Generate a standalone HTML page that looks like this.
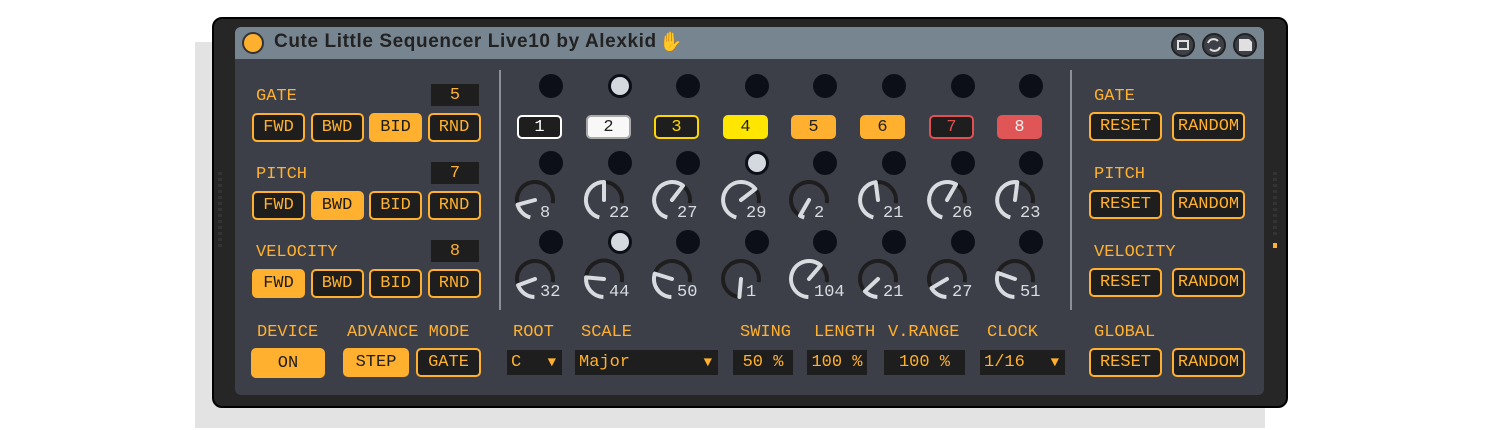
<!DOCTYPE html>
<html><head><meta charset="utf-8"><style>
body{margin:0;width:1500px;height:430px;background:#fff;position:relative;overflow:hidden;font-family:"Liberation Mono",monospace}
.a{position:absolute}
.lbl{position:absolute;color:#ffb02e;font-size:17px;line-height:17px}
.btn{position:absolute;box-sizing:border-box;border:2px solid #ffb02e;border-radius:5px;background:#1e1e1e;color:#ffb02e;font-size:17px;text-align:center;display:flex;align-items:center;justify-content:center}
.on{background:#ffb02e;color:#1e1e1e}
.box{position:absolute;background:#1e1e1e;color:#ffb02e;font-size:17px;display:flex;align-items:center}
.dot{position:absolute;width:24px;height:24px;border-radius:50%;background:#0c0e18}
.dot.lit{background:#d4d9e0;box-sizing:border-box;border:3px solid #0c0e18}
.step{position:absolute;box-sizing:border-box;width:45px;height:24px;border-radius:5px;border:2px solid;font-size:17px;display:flex;align-items:center;justify-content:center}
.num{position:absolute;color:#d8dce0;font-size:17px}
</style></head><body>
<div class="a" style="left:195px;top:42px;width:1070px;height:386px;background:#e3e3e3"></div>
<div class="a" style="left:212px;top:17px;width:1076px;height:391px;background:#262626;border:2px solid #000;box-sizing:border-box;border-radius:10px"></div>
<div class="a" style="left:235px;top:27px;width:1029px;height:368px;background:#3c3f48;border-radius:6px;overflow:hidden">
 <div class="a" style="left:0;top:0;width:1029px;height:32px;background:#778591"></div>
</div>
<div class="a" style="left:242px;top:32px;width:22px;height:22px;border-radius:50%;background:#ffb02e;border:2px solid #333;box-sizing:border-box"></div>
<div class="a" style="left:274px;top:31px;font:bold 19px 'Liberation Sans',sans-serif;color:#222;letter-spacing:0.6px">Cute Little Sequencer Live10 by Alexkid</div>
<div class="a" style="left:659px;top:30px;font-size:19px;color:#4a3aff">✋</div>
<svg class="a" style="left:1170px;top:32px" width="90" height="26">
 <g fill="#3d4047" stroke="#222" stroke-width="2"><circle cx="13" cy="13" r="11"/><circle cx="44" cy="13" r="11"/><circle cx="75" cy="13" r="11"/></g>
 <rect x="8" y="9" width="10" height="8" fill="none" stroke="#e0e0e0" stroke-width="2"/>
 <path d="M38 11a6 6 0 0 1 10-2M50 15a6 6 0 0 1-10 2" stroke="#e0e0e0" stroke-width="2" fill="none"/>
 <path d="M69 7h10l3 3v9h-13z" fill="#e0e0e0"/>
</svg>
<div class="a" style="left:218px;top:172px;width:4px;height:76px;background:repeating-linear-gradient(#333 0 3px,transparent 3px 6px)"></div>
<div class="a" style="left:1273px;top:172px;width:4px;height:66px;background:repeating-linear-gradient(#333 0 3px,transparent 3px 6px)"></div>
<div class="a" style="left:1273px;top:243px;width:4px;height:5px;background:#ffb02e"></div>
<div class="a" style="left:499px;top:70px;width:2px;height:240px;background:#8a8f98"></div>
<div class="a" style="left:1070px;top:70px;width:2px;height:240px;background:#8a8f98"></div>

<div id="L"></div>
<svg id="K" class="a" style="left:0;top:0" width="1500" height="430"></svg>
<script>
var h='';
function B(x,y,w,t,on,hh){h+='<div class="btn'+(on?' on':'')+'" style="left:'+x+'px;top:'+y+'px;width:'+w+'px;height:'+(hh||29)+'px">'+t+'</div>';}
function T(x,y,t){h+='<div class="lbl" style="left:'+x+'px;top:'+y+'px">'+t+'</div>';}
var rows=[['GATE','5',2],['PITCH','7',1],['VELOCITY','8',0]];
rows.forEach(function(r,i){var y=i*78;T(256,88+y,r[0]);
h+='<div class="box" style="left:431px;top:'+(84+y)+'px;width:48px;height:22px;justify-content:center">'+r[1]+'</div>';
['FWD','BWD','BID','RND'].forEach(function(t,j){B(252+j*58.5,113+y,53,t,j==r[2]);});
T(1094,88+y,r[0]);B(1089,112+y,73,'RESET');B(1172,112+y,73,'RANDOM');});
T(1094,324,'GLOBAL');B(1089,348,73,'RESET');B(1172,348,73,'RANDOM');
T(257,324,'DEVICE');B(251,348,74,'ON',1,30);
T(347,324,'ADVANCE MODE');B(343,348,66,'STEP',1);B(416,348,65,'GATE');
T(513,324,'ROOT');T(581,324,'SCALE');T(740,324,'SWING');T(814,324,'LENGTH');T(888,324,'V.RANGE');T(987,324,'CLOCK');
function X(x,w,t,c,dd){h+='<div class="box" style="left:'+x+'px;top:350px;width:'+w+'px;height:25px;'+(c?'justify-content:center':'padding-left:4px;box-sizing:border-box')+'">'+t+(dd?'<span style="position:absolute;right:6px;font-size:14px">▼</span>':'')+'</div>';}
X(507,55,'C',0,1);X(575,143,'Major',0,1);X(733,60,'50 %',1);X(807,60,'100 %',1);X(884,81,'100 %',1);X(980,85,'1/16',0,1);
var cx=[551,620,688,757,825,894,963,1031];
var sc=[['#1e1e1e','#fff','#fff'],['#f8f8f8','#aaa','#222'],['#1e1e1e','#ffd500','#ffd500'],['#ffe600','#ffe600','#222'],['#ffb02e','#ffb02e','#222'],['#ffb02e','#ffb02e','#222'],['#1e1e1e','#e05050','#e05050'],['#e05555','#e05555','#eee']];
var lit=[[1],[3],[1]];
var p=[8,22,27,29,2,21,26,23],v=[32,44,50,1,104,21,27,51];
cx.forEach(function(x,i){
 [86,163,242].forEach(function(y,k){h+='<div class="dot'+(lit[k].indexOf(i)>=0?' lit':'')+'" style="left:'+(x-12)+'px;top:'+(y-12)+'px"></div>';});
 var s=sc[i];h+='<div class="step" style="left:'+(x-34)+'px;top:115px;background:'+s[0]+';border-color:'+s[1]+';color:'+s[2]+'">'+(i+1)+'</div>';
 h+='<div class="num" style="left:'+(x-11)+'px;top:204px">'+p[i]+'</div>';
 h+='<div class="num" style="left:'+(x-11)+'px;top:283px">'+v[i]+'</div>';
});
document.getElementById('L').innerHTML=h;
var s='';
function pt(cx,cy,r,a){a=a*Math.PI/180;return [cx+r*Math.sin(a),cy-r*Math.cos(a)];}
function arc(cx,cy,r,a0,a1,c){if(a1<=a0)return;var A=pt(cx,cy,r,a0),Bp=pt(cx,cy,r,a1);s+='<path d="M'+A[0].toFixed(1)+' '+A[1].toFixed(1)+'A'+r+' '+r+' 0 '+((a1-a0)>180?1:0)+' 1 '+Bp[0].toFixed(1)+' '+Bp[1].toFixed(1)+'" stroke="'+c+'" stroke-width="4" fill="none" stroke-linecap="butt"/>';}
function knob(x,y,ang,st,en){arc(x,y,18,st,ang,'#d8dce0');arc(x,y,18,ang,en,'#1e1e1e');var P=pt(x,y,18,ang);s+='<line x1="'+x+'" y1="'+y+'" x2="'+P[0].toFixed(1)+'" y2="'+P[1].toFixed(1)+'" stroke="#d8dce0" stroke-width="4" stroke-linecap="round"/>';}
cx.forEach(function(x,i){
 knob(x-16,200,Math.max(-165,(p[i]-22)*7.5),-165,100);
 knob(x-16,279,-177+2.09*v[i],-178,100);
});
document.getElementById('K').innerHTML=s;
</script>
</body></html>
